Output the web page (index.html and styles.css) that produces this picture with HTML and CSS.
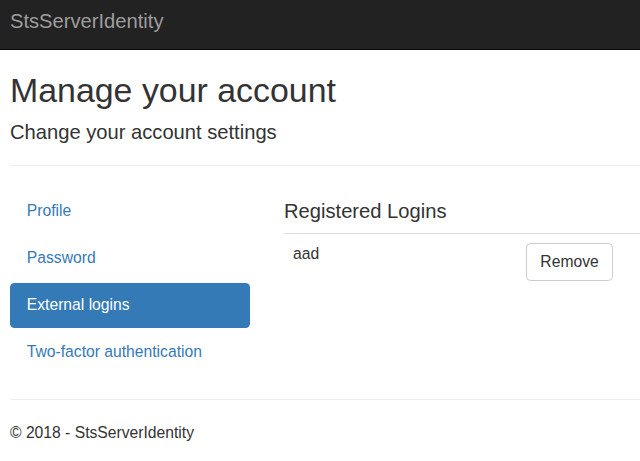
FILE: index.html
```html
<!DOCTYPE html>
<html lang="en">
<head>
<meta charset="utf-8">
<title>Manage your account - StsServerIdentity</title>
<link rel="stylesheet" href="styles.css">
</head>
<body>
<header class="navbar">
  <a class="navbar-brand" href="#">StsServerIdentity</a>
</header>
<div class="body-content">
  <h2 class="page-title">Manage your account</h2>
  <div>
    <h4 class="subtitle">Change your account settings</h4>
    <hr class="divider">
    <div class="row">
      <div class="side">
        <ul class="nav-pills">
          <li><a href="#">Profile</a></li>
          <li><a href="#">Password</a></li>
          <li class="active"><a href="#">External logins</a></li>
          <li><a href="#">Two-factor authentication</a></li>
        </ul>
      </div>
      <div class="main">
        <h4 class="section-title">Registered Logins</h4>
        <table class="table">
          <tbody>
            <tr>
              <td class="provider">aad</td>
              <td class="action"><button class="btn" type="button">Remove</button></td>
            </tr>
          </tbody>
        </table>
      </div>
    </div>
  </div>
  <hr class="divider footer-rule">
  <footer class="footer">
    <p>© 2018 - StsServerIdentity</p>
  </footer>
</div>
</body>
</html>
```
FILE: styles.css
```css
* { box-sizing: border-box; }
html, body { margin: 0; padding: 0; }
body {
  font-family: "Liberation Sans", Arial, Helvetica, sans-serif;
  font-size: 15.68px;
  line-height: 22.4px;
  color: #333;
  background: #fff;
  overflow: hidden;
}
a { text-decoration: none; }

.navbar {
  height: 50px;
  background: #222;
  border-bottom: 1px solid #080808;
  padding: 10px 0 0 10px;
}
.navbar-brand {
  display: block;
  font-size: 20.16px;
  line-height: 22.4px;
  color: #9d9d9d;
}

.body-content {
  padding-left: 10px;
}
.page-title {
  font-size: 33.9px;
  font-weight: 500;
  line-height: 1.1;
  margin: 22.4px 0 10px 0;
}
.subtitle, .section-title {
  font-size: 20.16px;
  font-weight: 500;
  line-height: 1.1;
  margin: 11.2px 0;
}
.section-title { margin-bottom: 10.4px; }
.divider {
  border: 0;
  border-top: 1px solid #eee;
  height: 0;
  margin: 22.4px 0;
}
.footer-rule { margin-top: 24px; }

.row {
  display: flex;
  gap: 34px;
}
.side { width: 240px; flex: none; }
.main { flex: 1; }

.nav-pills {
  list-style: none;
  margin: 0;
  padding: 0;
}
.nav-pills li + li { margin-top: 2.24px; }
.nav-pills a {
  display: block;
  padding: 11.2px 16.8px;
  line-height: 22.4px;
  color: #337ab7;
  border-radius: 4.5px;
}
.nav-pills .active a {
  background: #337ab7;
  color: #fff;
}

.table {
  width: 100%;
  border-collapse: collapse;
  border-spacing: 0;
}
.table td {
  border-top: 1px solid #ddd;
  padding: 8.96px;
  vertical-align: top;
  line-height: 22.4px;
}
.table .provider { width: 233px; }
.btn {
  font-family: inherit;
  font-size: 15.68px;
  line-height: 22.4px;
  padding: 7.2px 13.4px;
  color: #333;
  background: #fff;
  border: 1px solid #ccc;
  border-radius: 4.5px;
}

.footer p { margin: 0 0 11.2px 0; }
```
